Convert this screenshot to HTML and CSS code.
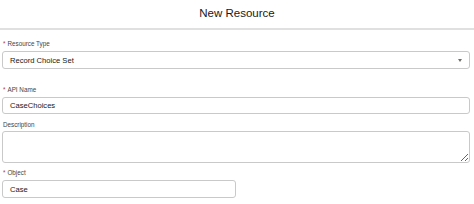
FILE: index.html
```html
<!DOCTYPE html>
<html>
<head>
<meta charset="utf-8">
<link rel="stylesheet" href="styles.css">
</head>
<body>
<div class="modal">
  <header class="header"><h1 class="title">New Resource</h1></header>
  <form class="form">
    <div class="field field-type">
      <label class="label"><abbr class="req">*</abbr>Resource Type</label>
      <div class="select-wrap">
        <select class="control select"><option>Record Choice Set</option></select>
        <span class="arrow"></span>
      </div>
    </div>
    <div class="field field-api">
      <label class="label"><abbr class="req">*</abbr>API Name</label>
      <input class="control" type="text" value="CaseChoices">
    </div>
    <div class="field field-desc">
      <label class="label">Description</label>
      <textarea class="control textarea"></textarea>
    </div>
    <div class="field field-obj">
      <label class="label"><abbr class="req">*</abbr>Object</label>
      <input class="control half" type="text" value="Case">
    </div>
  </form>
</div>
</body>
</html>
```
FILE: styles.css
```css
* { box-sizing: border-box; }
html, body { margin: 0; padding: 0; background: #fff; }
body {
  font-family: "Liberation Sans", Arial, sans-serif;
  color: #181818;
  width: 474px;
  height: 204px;
  overflow: hidden;
}
.header {
  height: 30px;
  border-bottom: 2px solid #e0e0e0;
  display: flex;
  justify-content: center;
}
.title {
  margin: 0;
  font-size: 11.5px;
  font-weight: normal;
  line-height: 26px;
  color: #181818;
}
.form {
  padding: 0 4px 0 2px;
  display: flex;
  flex-direction: column;
}
.field { display: flex; flex-direction: column; }
.field-type { margin-top: 9px; }
.field-api { margin-top: 16px; }
.field-desc { margin-top: 6px; }
.field-obj { margin-top: 5px; }
.label {
  font-size: 6.3px;
  line-height: 10px;
  height: 10px;
  color: #444;
  padding-left: 1px;
  margin-bottom: 2px;
}
.field-desc .label { margin-bottom: 1px; }
.req {
  color: #b03a3a;
  text-decoration: none;
  margin-right: 2px;
}
.control {
  display: block;
  width: 468px;
  height: 17px;
  border: 1px solid #c9c9c9;
  border-radius: 3px;
  padding: 0 0 0 7px;
  font-family: "Liberation Sans", Arial, sans-serif;
  font-size: 7.6px;
  color: #181818;
  background: #fff;
  outline: none;
  margin: 0;
}
.select-wrap { position: relative; width: 468px; }
.select { height: 18px; appearance: none; -webkit-appearance: none; }
.arrow {
  position: absolute;
  right: 8px;
  top: 8px;
  width: 0;
  height: 0;
  border-left: 2.5px solid transparent;
  border-right: 2.5px solid transparent;
  border-top: 3px solid #706e6b;
}
.textarea { height: 32px; resize: vertical; padding-top: 3px; }
.half { width: 234px; height: 18px; }
```
